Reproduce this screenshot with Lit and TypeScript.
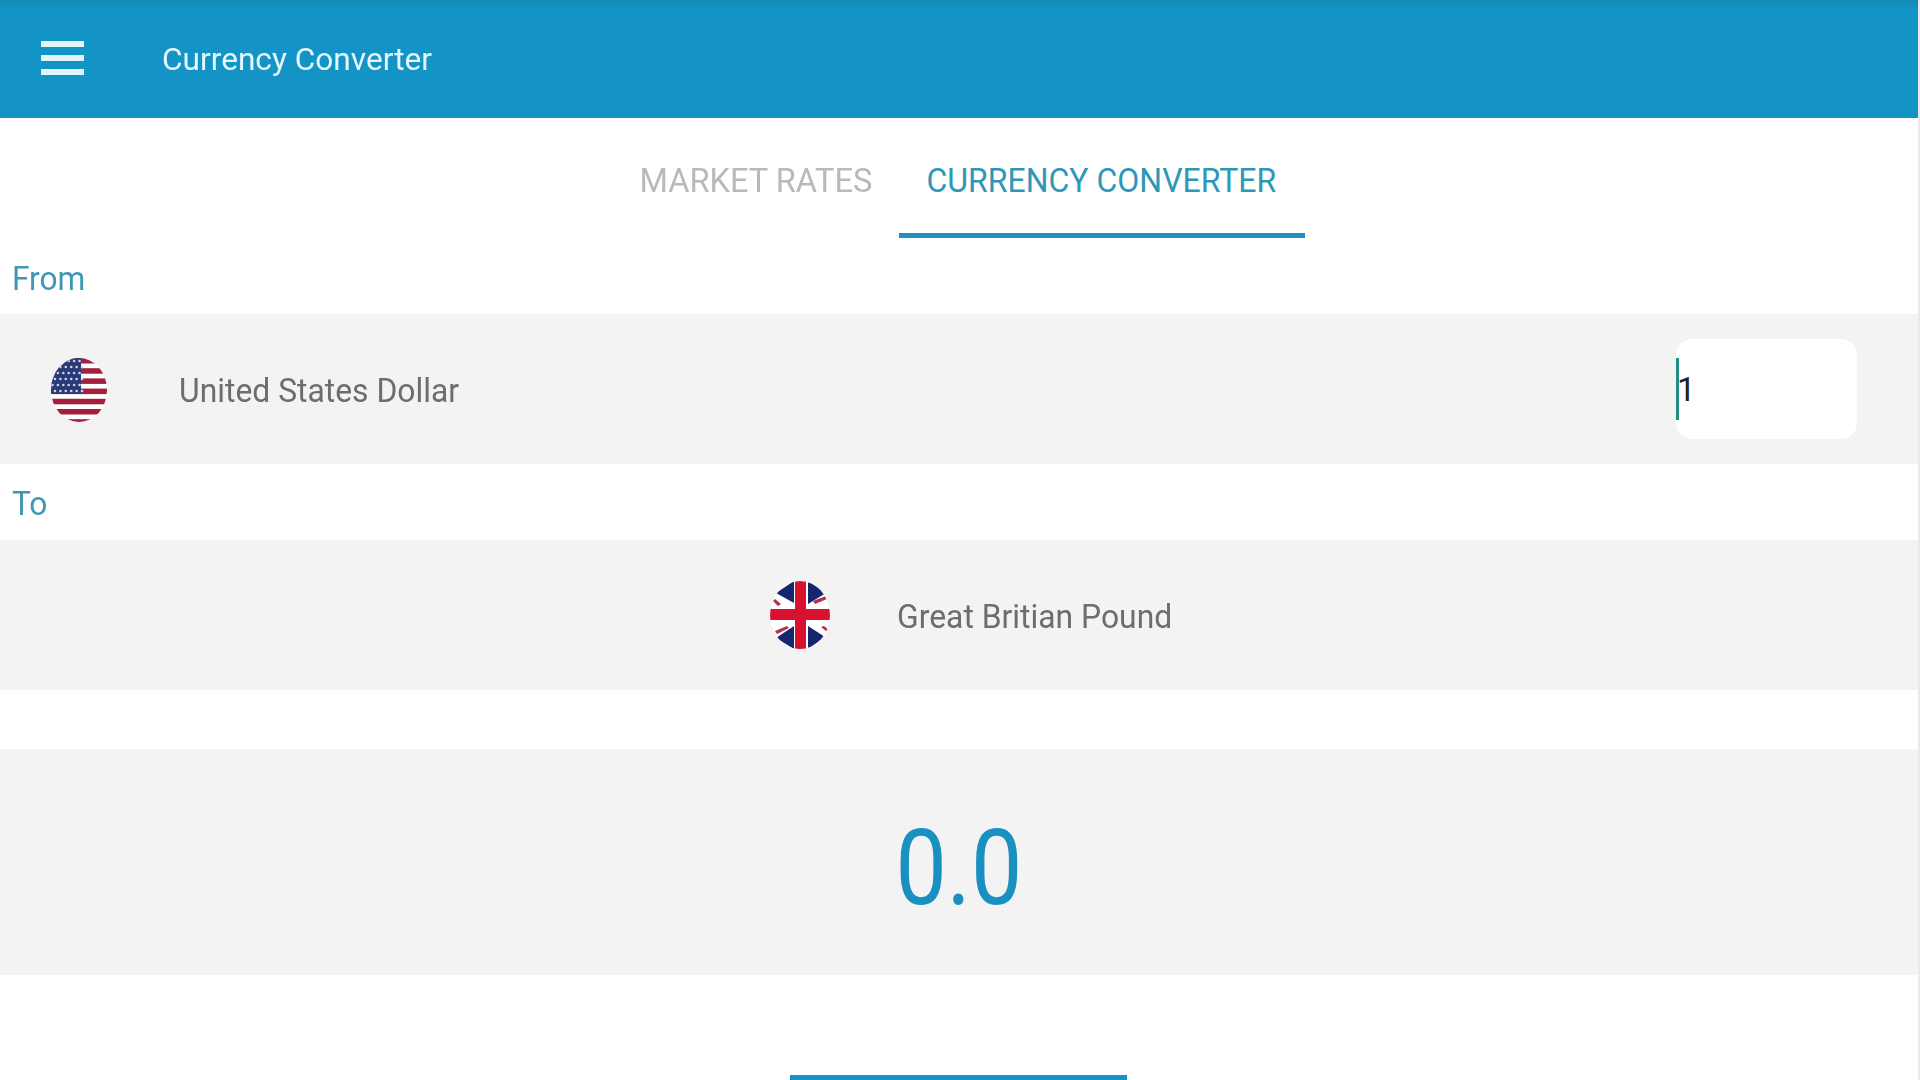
import { LitElement, html, css, svg } from "lit";
import { customElement } from "lit/decorators.js";

@customElement("app-root")
export class AppRoot extends LitElement {
  static styles = css`
    :host { display: block; position: relative; width: 1920px; height: 1080px; overflow: hidden; background: #fff; font-family: Roboto, "Liberation Sans", sans-serif; }
    .bar { height: 118px; background: #1493c6; display: flex; align-items: center; box-sizing: border-box; padding-left: 41px; background-image: linear-gradient(#1289b6, #1493c6 8px); }
    .menu { width: 43px; height: 34px; display: flex; flex-direction: column; justify-content: space-between; margin-top: -3px; }
    .menu i { display: block; height: 6px; background: #dff5fb; }
    .title { margin-left: 78px; font-size: 32px; color: #e4f7fc; transform: scaleX(.988); transform-origin: left center; white-space: nowrap; }
    .tabs { height: 121px; display: flex; box-sizing: border-box; padding-left: 620px; }
    .tab { display: flex; align-items: center; justify-content: center; height: 120px; box-sizing: border-box; padding-top: 9px; font-size: 33px; white-space: nowrap; border-bottom: 5px solid transparent; }
    .tab span { display: inline-block; }
    .tab.off { width: 272px; color: #b9b9b9; }
    .tab.off span { transform: scaleX(.987); }
    .tab.on { width: 406px; margin-left: 7px; color: #2e97b8; border-bottom-color: #1e8fc0; }
    .tab.on span { transform: translateX(-1px) scaleX(.97); }
    .label { height: 75px; box-sizing: border-box; padding: 15px 0 0 12px; font-size: 33px; color: #3f97b4; line-height: 50px; }
    .label.second { height: 76px; }
    .label span { display: inline-block; transform: scaleX(.96); transform-origin: left center; }
    .row { height: 150px; background: #f3f3f4; display: flex; align-items: center; }
    .name { font-size: 33px; color: #6d6d6d; white-space: nowrap; padding-top: 2px; }
    .name span { display: inline-block; transform: scaleX(.965); transform-origin: left center; }
    .from { padding-left: 50px; padding-right: 63px; }
    .from .name { margin-left: 71px; flex: 1; }
    .input { width: 181px; height: 100px; background: #fff; border-radius: 16px; display: flex; align-items: center; font-size: 33px; color: #222; box-sizing: border-box; }
    .caret { width: 3px; height: 62px; background: #1f8d80; margin-right: -2px; }
    .to { padding-left: 770px; }
    .to .name { margin-left: 67px; }
    .gap { height: 59px; }
    .result { height: 226px; background: #f3f3f4; display: flex; justify-content: center; align-items: center; color: #1891c0; font-size: 105px; }
    .result span { display: inline-block; transform: translate(-1px, 6px) scaleX(.87); }
    .btn { width: 337px; height: 10px; background: #1493c6; margin: 100px 0 0 790px; }
    .edge { position: absolute; left: 1918px; top: 0; width: 2px; height: 1080px; background: #e9eaec; }
    svg { display: block; flex: none; filter: blur(.5px); }
    .us-flag { margin-top: 2px; }
  `;

  render() {
    const stripes = [0, 1, 2, 3, 4, 5, 6];
    const stars: number[][] = [];
    for (let r = 0; r < 6; r++) for (let c = 0; c < 6; c++) stars.push([c * 5.4 + 2.5 + (r % 2 ? 2.5 : 0), r * 6 + 4]);
    return html`
      <div class="bar">
        <div class="menu"><i></i><i></i><i></i></div>
        <div class="title">Currency Converter</div>
      </div>
      <div class="tabs">
        <div class="tab off"><span>MARKET RATES</span></div>
        <div class="tab on"><span>CURRENCY CONVERTER</span></div>
      </div>
      <div class="label"><span>From</span></div>
      <div class="row from">
        <svg class="us-flag" width="58" height="66" viewBox="0 0 58 66">
          <defs><clipPath id="us"><ellipse cx="29" cy="33" rx="28" ry="32"/></clipPath></defs>
          <g clip-path="url(#us)">
            <rect width="58" height="66" fill="#fff"/>
            ${stripes.map((i) => svg`<rect x="0" y="${i * 10.2 + 1}" width="58" height="5.5" fill="#a21f3e"/>`)}
            <rect x="0" y="0" width="31" height="37" fill="#2a3a78"/>
            ${stars.map(([x, y]) => svg`<circle cx="${x}" cy="${y}" r="1.3" fill="#c9d5ea"/>`)}
          </g>
        </svg>
        <div class="name"><span>United States Dollar</span></div>
        <div class="input"><div class="caret"></div>1</div>
      </div>
      <div class="label second"><span>To</span></div>
      <div class="row to">
        <svg width="60" height="68" viewBox="0 0 60 68">
          <defs><clipPath id="uk"><ellipse cx="30" cy="34" rx="30" ry="34"/></clipPath></defs>
          <g clip-path="url(#uk)">
            <rect width="60" height="68" fill="#fff"/>
            <path d="M6 12 L24 0 L24 22 Z M38 0 L38 23 L56 12 Z M6 57 L24 45 L24 68 Z M38 45 L38 68 L55 56 Z" fill="#14266e"/>
            <path d="M3 20 L5 18 L11 23 L8 25 Z M5 50 L17 45 L19 47 L7 53 Z M43 20 L56 15 L57 18 L45 23 Z M51 46 L54 45 L59 49 L56 50 Z" fill="#b8304f"/>
            <rect x="25" y="0" width="11" height="68" fill="#d9112f"/>
            <rect x="0" y="28" width="60" height="11" fill="#d9112f"/>
          </g>
        </svg>
        <div class="name"><span>Great Britian Pound</span></div>
      </div>
      <div class="gap"></div>
      <div class="result"><span>0.0</span></div>
      <div class="btn"></div>
      <div class="edge"></div>
    `;
  }
}
